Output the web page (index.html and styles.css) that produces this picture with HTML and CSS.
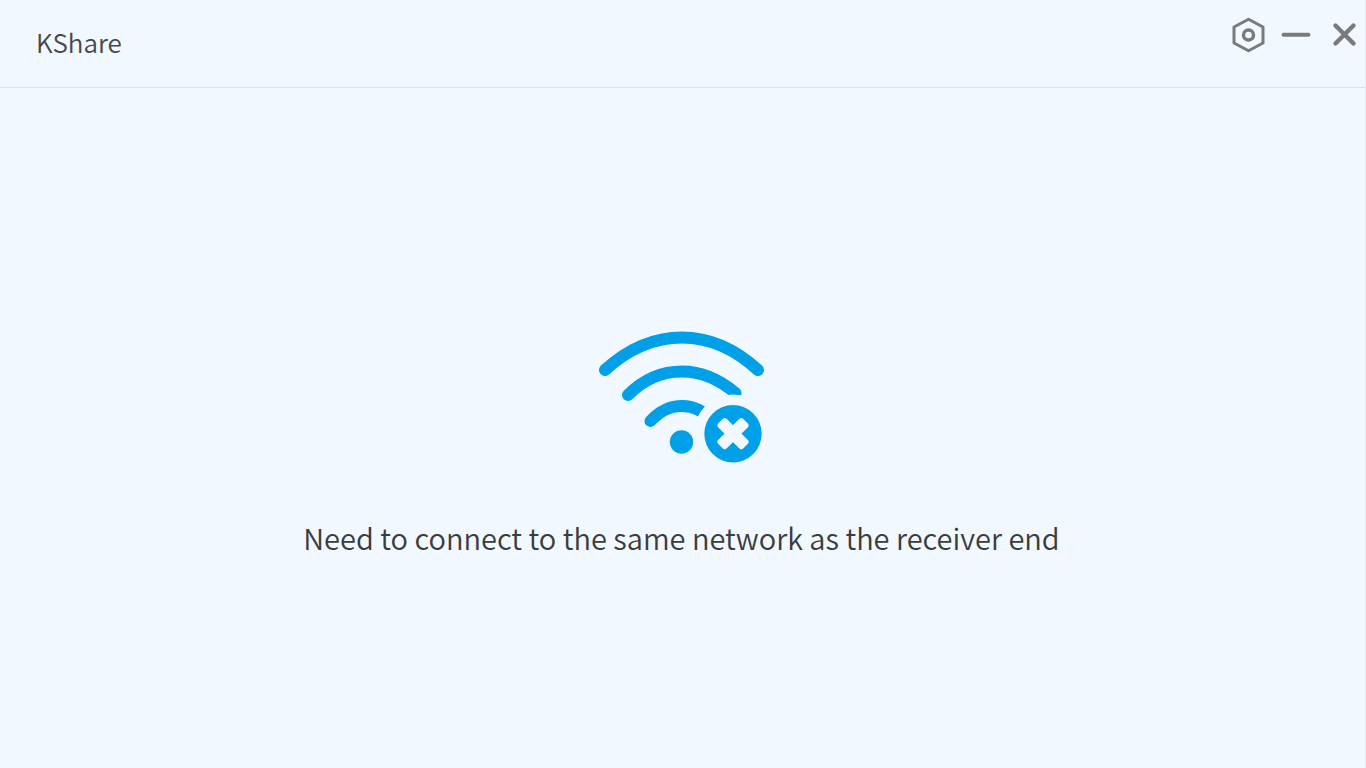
FILE: index.html
```
<!DOCTYPE html>
<html lang="en">
<head>
    <meta charset="utf-8">
    <title>KShare</title>
    <link rel="stylesheet" href="styles.css">
</head>

<body>
    <header class="titlebar">
        <h1 class="title">KShare</h1>
        <div class="controls">
            <button class="control" type="button" aria-label="Settings">
                <svg width="36" height="36" viewBox="0 0 36 36">
                    <path d="M17.5 2.2 L32 10 V26 L17.5 33.8 L3 26 V10 Z" stroke-width="3"/>
                    <circle cx="17.5" cy="18" r="5" stroke-width="3.4"/>
                </svg>
            </button>
            <button class="control" type="button" aria-label="Minimize">
                <svg width="36" height="36" viewBox="0 0 36 36">
                    <path d="M4.5 17.7 H29.5" stroke-width="4"/>
                </svg>
            </button>
            <button class="control" type="button" aria-label="Close">
                <svg width="36" height="36" viewBox="0 0 36 36">
                    <path d="M8.5 8.5 L26.5 26.5 M26.5 8.5 L8.5 26.5" stroke-width="4.4"/>
                </svg>
            </button>
        </div>
    </header>

    <main class="content">
        <svg class="wifi" width="166" height="132" viewBox="599 331 166 132" aria-hidden="true">
            <mask id="cutout" maskUnits="userSpaceOnUse" x="599" y="331" width="166" height="132">
                <rect x="599" y="331" width="166" height="132" fill="#fff"/>
                <circle cx="733" cy="434" r="39.4" fill="#000"/>
            </mask>
            <g class="waves" mask="url(#cutout)">
                <path d="M605 370 C628 349 654 337.5 682 337.5 C710 337.5 735 349 758 370"/>
                <path d="M628 395 C643 380 661 371.5 682 371.5 C703 371.5 720 380 735.5 393"/>
                <path d="M650.5 421 C659 412 668 406 682 406 C694 406 704 411 713 421"/>
            </g>
            <circle class="dot" cx="681.5" cy="442" r="11.7"/>
            <circle class="dot" cx="733" cy="433.7" r="28.7"/>
            <g class="cross" transform="rotate(45 733 433.7)">
                <rect x="715.3" y="427.7" width="35.4" height="12" rx="3"/>
                <rect x="727" y="416" width="12" height="35.4" rx="3"/>
            </g>
        </svg>
        <p class="message">Need to connect to the same network as the receiver end</p>
    </main>
</body>
</html>
```
FILE: styles.css
```
* {
    box-sizing: border-box;
}

body {
    display: flex;
    flex-direction: column;
    min-height: 100vh;
    margin: 0;
    background-color: #f1f8ff;
    border-right: 1px solid #e6ecf4;
    color: #3c3c3c;
    font-family: "Noto Sans CJK SC", "Noto Sans", sans-serif;
    font-weight: 350;
}

.titlebar {
    display: flex;
    justify-content: space-between;
    align-items: flex-start;
    height: 88px;
    padding: 0 2px 0 36px;
    border-bottom: 1px solid #dce1ea;
}

.title {
    margin: 0;
    color: #484848;
    font-size: 26px;
    font-weight: 350;
    line-height: 84px;
}

.controls {
    display: flex;
    gap: 12px;
    padding-top: 17px;
}

.control {
    display: flex;
    padding: 0;
    border: none;
    background: none;
    cursor: pointer;
}

.control svg {
    fill: none;
    stroke: #7a7a7a;
    stroke-linecap: round;
    stroke-linejoin: round;
}

.content {
    flex: 1;
    display: flex;
    flex-direction: column;
    justify-content: center;
    align-items: center;
    gap: 50px;
    padding: 36px 2px 0 0;
}

.waves {
    fill: none;
    stroke: #00a0e9;
    stroke-width: 12;
    stroke-linecap: round;
}

.dot {
    fill: #00a0e9;
}

.cross {
    fill: #f1f8ff;
}

.message {
    margin: 0;
    font-size: 29px;
    line-height: 48px;
}
```
